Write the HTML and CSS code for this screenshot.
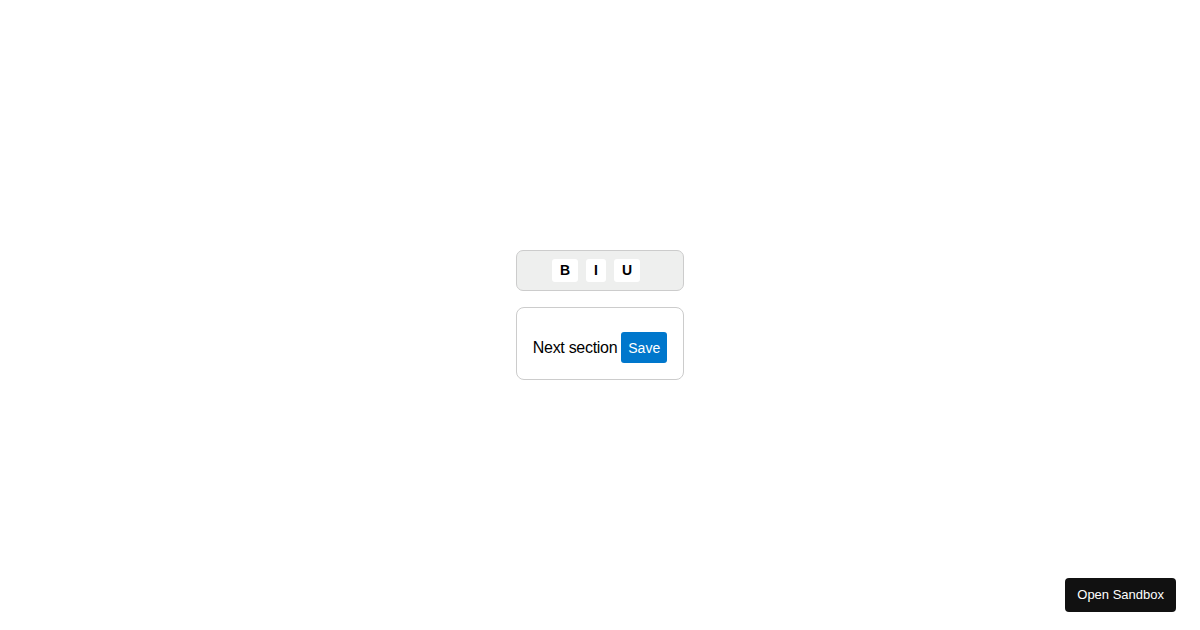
FILE: index.html
```html
<!DOCTYPE html>
<html>
<head>
<meta charset="utf-8">
<link rel="stylesheet" href="styles.css">
</head>
<body>
<main class="stage">
  <div class="stack">
    <div class="toolbar">
      <button class="tool">B</button>
      <button class="tool">I</button>
      <button class="tool">U</button>
    </div>
    <div class="card">
      <span class="label">Next section</span>
      <button class="save">Save</button>
    </div>
  </div>
</main>
<button class="sandbox">Open Sandbox</button>
</body>
</html>
```
FILE: styles.css
```css
html, body {
  margin: 0;
  padding: 0;
  background: #fff;
  font-family: "Liberation Sans", Arial, sans-serif;
}
.stage {
  height: 630px;
  display: flex;
  align-items: center;
  justify-content: center;
}
.stack {
  display: flex;
  flex-direction: column;
  gap: 16px;
}
.toolbar {
  box-sizing: border-box;
  height: 41px;
  display: flex;
  align-items: center;
  justify-content: center;
  gap: 8px;
  padding-right: 8px;
  background: #eeefee;
  border: 1px solid #cccccc;
  border-radius: 7px;
}
.tool {
  border: none;
  background: #fff;
  font-family: "Liberation Sans", Arial, sans-serif;
  font-weight: bold;
  font-size: 14px;
  line-height: 15px;
  padding: 4px 8px;
  border-radius: 3px;
  color: #000;
}
.card {
  display: flex;
  align-items: center;
  gap: 4px;
  padding: 24px 16px 16px;
  border: 1px solid #cccccc;
  border-radius: 8px;
}
.label {
  font-size: 16px;
  letter-spacing: -0.3px;
  white-space: nowrap;
  color: #000;
}
.save {
  border: none;
  background: #0077cc;
  color: #fff;
  font-family: "Liberation Sans", Arial, sans-serif;
  font-size: 14px;
  line-height: 16px;
  padding: 8px 7px 7px;
  border-radius: 3px;
}
.sandbox {
  position: fixed;
  right: 24px;
  bottom: 18px;
  border: none;
  background: #111111;
  color: #fff;
  font-family: "Liberation Sans", Arial, sans-serif;
  font-size: 13px;
  line-height: 16px;
  padding: 9px 12px;
  border-radius: 4px;
}
```
